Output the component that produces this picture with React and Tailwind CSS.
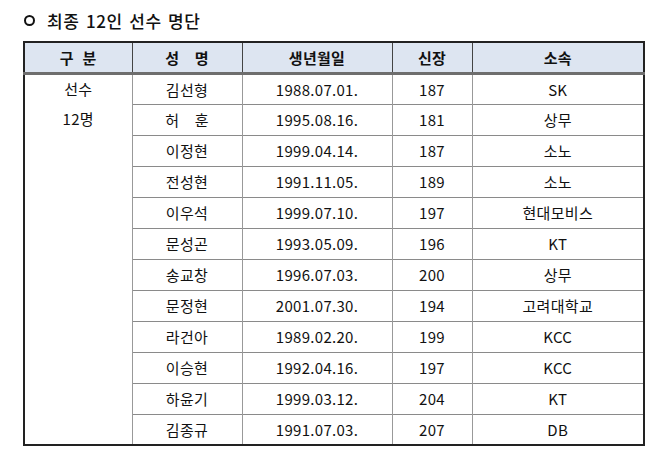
import React from "react";

const rows = [
  ["김선형", "1988.07.01.", "187", "SK"],
  ["허　훈", "1995.08.16.", "181", "상무"],
  ["이정현", "1999.04.14.", "187", "소노"],
  ["전성현", "1991.11.05.", "189", "소노"],
  ["이우석", "1999.07.10.", "197", "현대모비스"],
  ["문성곤", "1993.05.09.", "196", "KT"],
  ["송교창", "1996.07.03.", "200", "상무"],
  ["문정현", "2001.07.30.", "194", "고려대학교"],
  ["라건아", "1989.02.20.", "199", "KCC"],
  ["이승현", "1992.04.16.", "197", "KCC"],
  ["하윤기", "1999.03.12.", "204", "KT"],
  ["김종규", "1991.07.03.", "207", "DB"],
];

export default function App() {
  return (
    <div
      className="w-[658px] h-[461px] bg-white text-[#111]"
      style={{ fontFamily: '"Noto Sans CJK KR", "Noto Sans", sans-serif' }}
    >
      <div className="flex items-center pt-[8px] pl-[24px] h-[32px]">
        <span className="inline-block w-[11px] h-[11px] rounded-full border-[2px] border-[#111]" />
        <span className="ml-[12px] text-[17px] font-medium leading-none tracking-[0.6px] [word-spacing:2px]">
          최종 12인 선수 명단
        </span>
      </div>
      <div className="pl-[23px] pt-[9px]">
        <table className="table-fixed border-collapse w-[620px] border-[2px] border-[#222] text-[15px] tracking-[0.3px]">
          <colgroup>
            <col className="w-[108px]" />
            <col className="w-[110px]" />
            <col className="w-[150px]" />
            <col className="w-[80px]" />
            <col className="w-[172px]" />
          </colgroup>
          <thead>
            <tr className="h-[31px] bg-[#dde5f1] border-b-[3px] border-[#6e6e6e]">
              <th className="font-bold border-r border-[#444] p-0 leading-none [word-spacing:5px]">구 분</th>
              <th className="font-bold border-r border-[#444] p-0 leading-none">성　명</th>
              <th className="font-bold border-r border-[#444] p-0 leading-none">생년월일</th>
              <th className="font-bold border-r border-[#444] p-0 leading-none">신장</th>
              <th className="font-bold p-0 leading-none">소속</th>
            </tr>
          </thead>
          <tbody>
            {rows.map((r, i) => (
              <tr key={i} className="h-[31px] border-b border-[#8a8a8a]">
                {i === 0 && (
                  <td
                    rowSpan={12}
                    className="align-top text-center border-r border-[#999] p-0"
                  >
                    <div className="h-[30px] flex items-center justify-center">선수</div>
                    <div className="h-[30px] flex items-center justify-center">12명</div>
                  </td>
                )}
                <td className="text-center border-r border-[#999] p-0 leading-none">{r[0]}</td>
                <td className="text-center border-r border-[#999] p-0 leading-none">{r[1]}</td>
                <td className="text-center border-r border-[#999] p-0 leading-none">{r[2]}</td>
                <td className="text-center p-0 leading-none">{r[3]}</td>
              </tr>
            ))}
          </tbody>
        </table>
      </div>
    </div>
  );
}
